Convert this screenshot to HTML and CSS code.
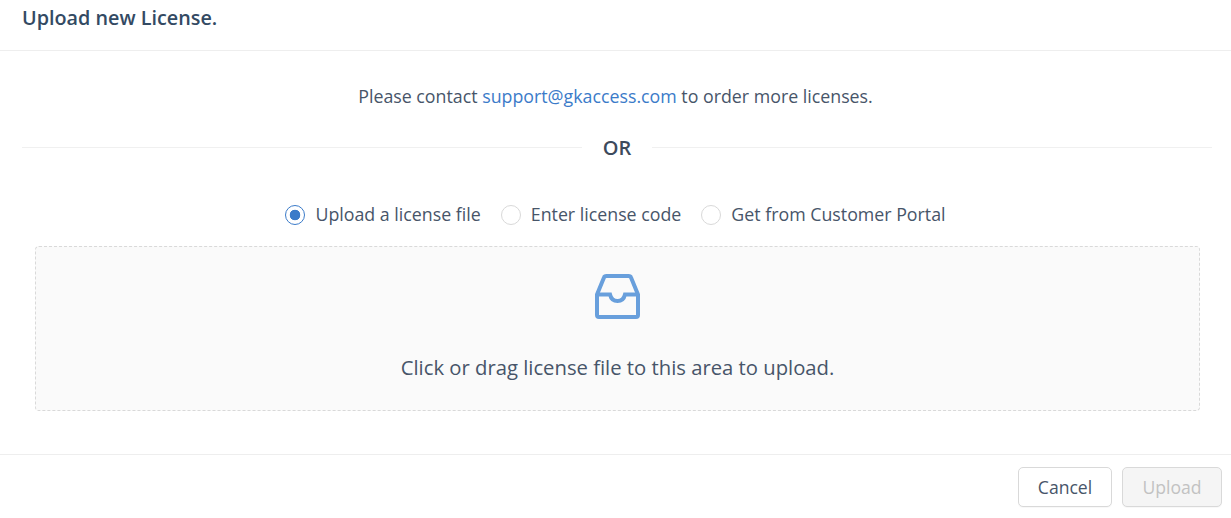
FILE: index.html
```html
<!DOCTYPE html>
<html>
<head>
    <title>Upload new License</title>
    <link rel="stylesheet" href="styles.css">
</head>
<body>
    <div class="modal">
        <div class="modal-header">Upload new License.</div>
        <div class="modal-body">
            <p class="contact">Please contact <a href="#">support@gkaccess.com</a> to order more licenses.</p>
            <div class="divider"><span>OR</span></div>
            <div class="radio-group">
                <label class="radio checked"><span class="radio-dot"></span>Upload a license file</label>
                <label class="radio"><span class="radio-dot"></span>Enter license code</label>
                <label class="radio"><span class="radio-dot"></span>Get from Customer Portal</label>
            </div>
            <div class="dragger">
                <svg class="inbox-icon" width="46" height="48" viewBox="0 0 46 48">
                    <path d="M2 22.500 L9 5.500 Q9.500 4 11.500 4 L33.500 4 Q35.500 4 36 5.500 L43 22.500 L43 43 Q43 45 41 45 L4 45 Q2 45 2 43 Z" fill="none" stroke="#689fdc" stroke-width="4" stroke-linejoin="round"/>
                    <path d="M2 22.500 L15 22.500 Q16.500 29 22.500 29 Q28.500 29 30 22.500 L43 22.500" fill="none" stroke="#689fdc" stroke-width="4"/>
                </svg>
                <p class="dragger-text">Click or drag license file to this area to upload.</p>
            </div>
        </div>
        <div class="modal-footer">
            <button class="btn btn-cancel">Cancel</button>
            <button class="btn btn-disabled" disabled>Upload</button>
        </div>
    </div>
</body>
</html>
```

FILE: styles.css
```css
body {
    margin: 0;
    background-color: #fff;
    font-family: "Open Sans", sans-serif;
    color: #475569;
}

.modal {
    width: 1231px;
    height: 518px;
    overflow: hidden;
}

.modal-header {
    height: 50px;
    padding: 0 22px;
    border-bottom: 1px solid #eeeeee;
    font-size: 19.8px;
    font-weight: 600;
    line-height: 35px;
    color: #334a63;
}

.modal-body {
    height: 403px;
}

.contact {
    margin: 0;
    padding-top: 33px;
    height: 25px;
    font-size: 17.8px;
    line-height: 25px;
    text-align: center;
}

.contact a {
    color: #3b7bc9;
    text-decoration: none;
}

.divider {
    display: flex;
    align-items: center;
    margin: 26px 19px 0 22px;
    height: 25px;
    font-size: 20px;
    font-weight: 600;
    color: #3d4a5c;
}

.divider::before,
.divider::after {
    content: "";
    flex: 1;
    height: 1px;
    background-color: #f0f0f0;
}

.divider span {
    padding: 0 21px;
}

.radio-group {
    display: flex;
    justify-content: center;
    gap: 20px;
    margin-top: 42px;
    height: 25px;
    font-size: 17.8px;
    line-height: 25px;
}

.radio {
    display: flex;
    align-items: center;
    gap: 10px;
}

.radio-dot {
    width: 20px;
    height: 20px;
    border: 1px solid #d9d9d9;
    border-radius: 50%;
    box-sizing: border-box;
    background-color: #fff;
}

.radio.checked .radio-dot {
    border-color: #3b7bc9;
    background: radial-gradient(circle, #3b7bc9 0, #3b7bc9 5px, #fff 5.600px);
}

.dragger {
    margin: 19px 31px 0 35px;
    height: 165px;
    box-sizing: border-box;
    border: 1px dashed #d9d9d9;
    border-radius: 4px;
    background-color: #fafafa;
    display: flex;
    flex-direction: column;
    align-items: center;
    padding-top: 25px;
}

.inbox-icon {
    display: block;
}

.dragger-text {
    margin: 33px 0 0;
    font-size: 20.250px;
    line-height: 28px;
}

.modal-footer {
    border-top: 1px solid #eeeeee;
    display: flex;
    justify-content: flex-end;
    gap: 10px;
    padding: 12px 9px 0 0;
}

.btn {
    width: 100px;
    height: 40px;
    padding: 0;
    border: 1px solid #d9d9d9;
    border-radius: 5px;
    background-color: #fff;
    font-family: inherit;
    font-size: 17.6px;
    color: #475569;
    box-shadow: 0 1px 1px rgba(0, 0, 0, 0.03);
}

.btn-cancel {
    width: 94px;
}

.btn-disabled {
    background-color: #f5f5f5;
    color: #c2c2c2;
}
```
